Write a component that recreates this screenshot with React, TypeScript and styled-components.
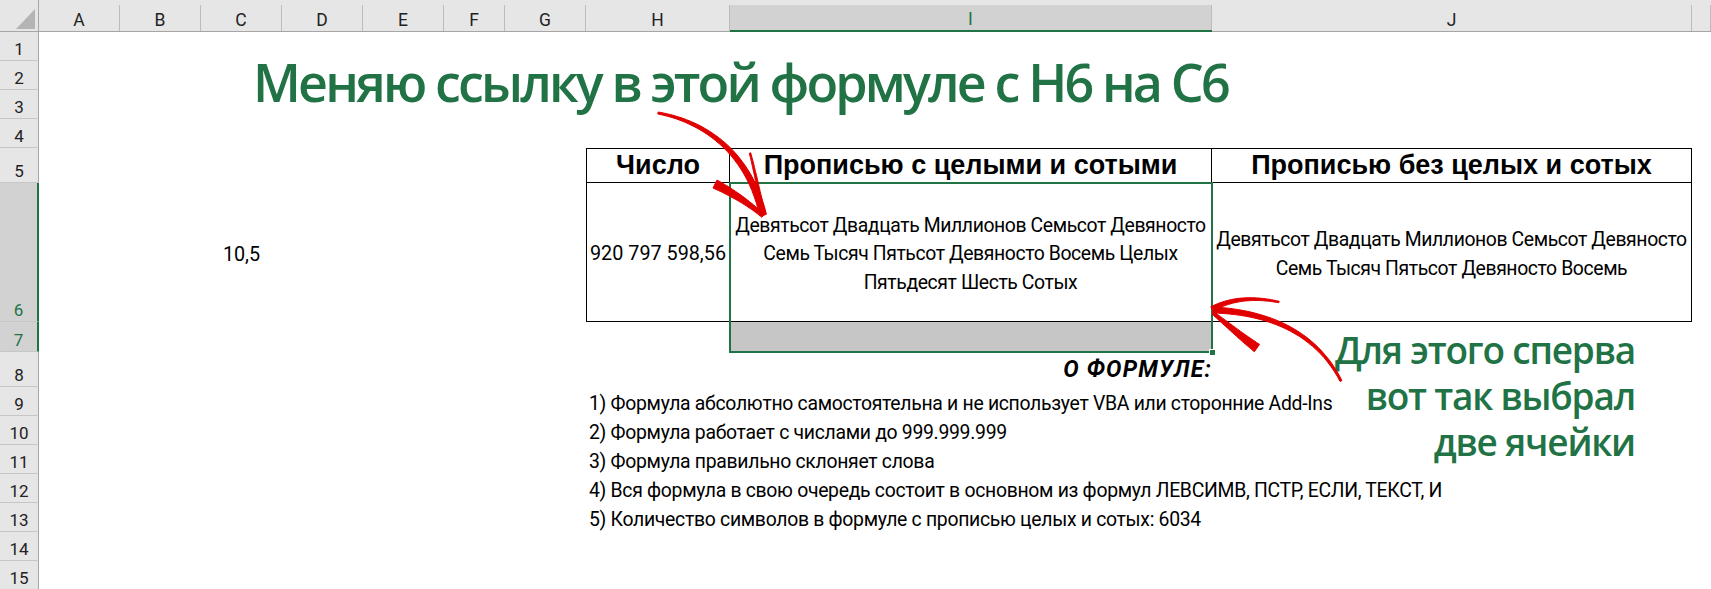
import React from "react";
import styled, { createGlobalStyle } from "styled-components";

const GREEN = "#217346";
const RED = "#e10000";
const CELL_FONT = `Roboto, "Noto Sans", sans-serif`;

const COLUMNS = [
  { name: "A", width: 81 },
  { name: "B", width: 81 },
  { name: "C", width: 81 },
  { name: "D", width: 81 },
  { name: "E", width: 81 },
  { name: "F", width: 61 },
  { name: "G", width: 81 },
  { name: "H", width: 144 },
  { name: "I", width: 482 },
  { name: "J", width: 480 },
];

const ROW_HEIGHTS = [29, 29, 29, 29, 35, 139, 30, 35, 29, 29, 29, 29, 29, 29, 29];
const SELECTED_ROWS = [6, 7];
const SELECTED_COL = "I";

const NOTES = [
  "1) Формула абсолютно самостоятельна и не использует VBA или сторонние Add-Ins",
  "2) Формула работает с числами до 999.999.999",
  "3) Формула правильно склоняет слова",
  "4) Вся формула в свою очередь состоит в основном из формул ЛЕВСИМВ, ПСТР, ЕСЛИ, ТЕКСТ, И",
  "5) Количество символов в формуле с прописью целых и сотых: 6034",
];

const GlobalStyle = createGlobalStyle`
  html, body {
    margin: 0;
    padding: 0;
    background: #fff;
  }
  body {
    width: 1711px;
    height: 589px;
    overflow: hidden;
  }
  * {
    box-sizing: border-box;
  }
`;

const Sheet = styled.div`
  position: relative;
  display: grid;
  grid-template-columns: 39px ${COLUMNS.map((c) => `${c.width}px`).join(" ")} 1fr;
  grid-template-rows: 32px ${ROW_HEIGHTS.map((h) => `${h}px`).join(" ")};
  width: 1711px;
  height: 589px;
  overflow: hidden;
  background: #fff;
  font-family: ${CELL_FONT};
  color: #000;
`;

const Corner = styled.div`
  grid-column: 1;
  grid-row: 1;
  display: flex;
  align-items: flex-end;
  justify-content: flex-end;
  padding: 0 3px 2px 0;
  background: #e6e6e6;
  border-right: 1px solid #a6a6a6;
  border-bottom: 1px solid #a6a6a6;
`;

const ColHead = styled.div<{ $col: number; $selected?: boolean }>`
  grid-column: ${(p) => p.$col};
  grid-row: 1;
  display: flex;
  padding-top: 5px;
  background: #e6e6e6;
  border-bottom: ${(p) => (p.$selected ? `2px solid ${GREEN}` : "1px solid #a6a6a6")};
`;

const ColLabel = styled.div<{ $selected?: boolean }>`
  flex: 1;
  display: flex;
  align-items: center;
  justify-content: center;
  padding-top: 3px;
  border-right: 1px solid #bcbcbc;
  background: ${(p) => (p.$selected ? "#d2d2d2" : "transparent")};
  color: ${(p) => (p.$selected ? GREEN : "#222")};
  font-size: 17.5px;
  line-height: 18px;
`;

const RowHead = styled.div<{ $row: number; $selected?: boolean }>`
  grid-column: 1;
  grid-row: ${(p) => p.$row};
  display: flex;
  align-items: flex-end;
  justify-content: center;
  padding-bottom: 2px;
  background: ${(p) => (p.$selected ? "#d2d2d2" : "#e6e6e6")};
  border-bottom: 1px solid #c6c6c6;
  border-right: ${(p) => (p.$selected ? `2px solid ${GREEN}` : "1px solid #a6a6a6")};
  color: ${(p) => (p.$selected ? GREEN : "#222")};
  font-size: 17px;
  line-height: 17px;
`;

const Cell = styled.div<{ $col: number; $row: number; $span?: number }>`
  grid-column: ${(p) => p.$col} / span ${(p) => p.$span ?? 1};
  grid-row: ${(p) => p.$row};
  min-width: 0;
`;

const ValueCell = styled(Cell)`
  display: flex;
  align-items: center;
  justify-content: center;
  padding-top: 5px;
  font-size: 19.8px;
  line-height: 28.3px;
`;

const TableHead = styled(Cell)<{ $first?: boolean }>`
  border-top: 1px solid #000;
  border-right: 1px solid #000;
  border-bottom: 1px solid #000;
  border-left: ${(p) => (p.$first ? "1px solid #000" : "none")};
  font-family: "Liberation Sans", Arial, sans-serif;
  font-weight: bold;
  font-size: 27px;
  line-height: 33px;
  text-align: center;
  white-space: nowrap;
`;

const TableCell = styled(Cell)<{ $first?: boolean; $numeric?: boolean }>`
  display: flex;
  flex-direction: column;
  align-items: center;
  justify-content: center;
  padding-top: 5px;
  border-right: 1px solid #000;
  border-bottom: 1px solid #000;
  border-left: ${(p) => (p.$first ? "1px solid #000" : "none")};
  font-size: ${(p) => (p.$numeric ? "19.8px" : "19.4px")};
  line-height: 28.3px;
  letter-spacing: ${(p) => (p.$numeric ? "0" : "-0.4px")};
  white-space: nowrap;
`;

const Shade = styled(Cell)`
  background: #c6c6c6;
`;

const Selection = styled.div`
  grid-column: 10;
  grid-row: 7 / 9;
  margin: -1px;
  position: relative;
  border: 2px solid ${GREEN};
  pointer-events: none;
  z-index: 1;
`;

const FillHandle = styled.span`
  position: absolute;
  right: -5px;
  bottom: -5px;
  width: 7px;
  height: 7px;
  background: ${GREEN};
  border: 1px solid #fff;
`;

const SectionTitle = styled(Cell)`
  text-align: right;
  font-weight: bold;
  font-style: italic;
  font-size: 23px;
  line-height: 35px;
  letter-spacing: 1.2px;
  white-space: nowrap;
`;

const NoteCell = styled(Cell)`
  padding: 2px 0 0 3px;
  font-size: 19.4px;
  line-height: 29px;
  letter-spacing: -0.3px;
  white-space: nowrap;
  overflow: visible;
`;

const Callout = styled.div`
  position: absolute;
  font-family: "Open Sans", sans-serif;
  font-weight: 600;
  color: ${GREEN};
  white-space: nowrap;
  z-index: 3;
`;

const Title = styled(Callout)`
  left: 253px;
  top: 56px;
  font-size: 52px;
  line-height: 52px;
  letter-spacing: -2.85px;
`;

const SideNote = styled(Callout)`
  right: 76px;
  top: 327px;
  font-size: 37px;
  line-height: 46px;
  text-align: right;
  letter-spacing: -1.2px;
`;

const ArrowLayer = styled.svg`
  position: absolute;
  inset: 0;
  width: 1711px;
  height: 589px;
  pointer-events: none;
  z-index: 4;
`;

type P = [number, number];

// tapered brush stroke along a cubic curve
function taper(p0: P, p1: P, p2: P, p3: P, w0: number, w1: number, n = 28) {
  const pt = (t: number): P => {
    const u = 1 - t;
    return [
      u * u * u * p0[0] + 3 * u * u * t * p1[0] + 3 * u * t * t * p2[0] + t * t * t * p3[0],
      u * u * u * p0[1] + 3 * u * u * t * p1[1] + 3 * u * t * t * p2[1] + t * t * t * p3[1],
    ];
  };
  const der = (t: number): P => {
    const u = 1 - t;
    return [
      3 * u * u * (p1[0] - p0[0]) + 6 * u * t * (p2[0] - p1[0]) + 3 * t * t * (p3[0] - p2[0]),
      3 * u * u * (p1[1] - p0[1]) + 6 * u * t * (p2[1] - p1[1]) + 3 * t * t * (p3[1] - p2[1]),
    ];
  };
  const left: P[] = [];
  const right: P[] = [];
  for (let i = 0; i <= n; i++) {
    const t = i / n;
    const [x, y] = pt(t);
    const [dx, dy] = der(t);
    const len = Math.hypot(dx, dy) || 1;
    const nx = -dy / len;
    const ny = dx / len;
    const w = (w0 + (w1 - w0) * t) / 2;
    left.push([x + nx * w, y + ny * w]);
    right.push([x - nx * w, y - ny * w]);
  }
  const f = (p: P) => `${p[0].toFixed(1)},${p[1].toFixed(1)}`;
  return `M${left.map(f).join("L")}L${right.reverse().map(f).join("L")}Z`;
}

const STROKES = [
  // arrow to I6
  taper([658, 113], [702, 121], [748, 150], [763, 215], 2, 7),
  taper([715, 184], [733, 193], [750, 204], [763, 216], 9, 3.5),
  taper([750, 153], [755, 172], [759, 192], [764, 215], 1.5, 3),
  // arrow to selection edge
  taper([1213, 310], [1265, 312], [1315, 330], [1341, 381], 6, 2),
  taper([1212, 309], [1232, 298], [1255, 297], [1279, 302], 5, 1.5),
  taper([1213, 313], [1228, 325], [1243, 338], [1257, 348], 3, 9),
];

const App: React.FC = () => {
  return (
    <>
      <GlobalStyle />
      <Sheet>
        <Corner>
          <svg width="19" height="20" viewBox="0 0 19 20">
            <polygon points="19,0 19,20 0,20" fill="#b4b4b4" />
          </svg>
        </Corner>
        {COLUMNS.map((c, i) => (
          <ColHead key={c.name} $col={i + 2} $selected={c.name === SELECTED_COL}>
            <ColLabel $selected={c.name === SELECTED_COL}>{c.name}</ColLabel>
          </ColHead>
        ))}
        <ColHead $col={12}>
          <ColLabel />
        </ColHead>
        {ROW_HEIGHTS.map((_, i) => (
          <RowHead key={i} $row={i + 2} $selected={SELECTED_ROWS.includes(i + 1)}>
            {i + 1}
          </RowHead>
        ))}

        <ValueCell $col={4} $row={7}>10,5</ValueCell>

        <TableHead $col={9} $row={6} $first>Число</TableHead>
        <TableHead $col={10} $row={6}>Прописью с целыми и сотыми</TableHead>
        <TableHead $col={11} $row={6}>Прописью без целых и сотых</TableHead>

        <TableCell $col={9} $row={7} $first $numeric>920 797 598,56</TableCell>
        <TableCell $col={10} $row={7}>
          <span>Девятьсот Двадцать Миллионов Семьсот Девяносто</span>
          <span>Семь Тысяч Пятьсот Девяносто Восемь Целых</span>
          <span>Пятьдесят Шесть Сотых</span>
        </TableCell>
        <TableCell $col={11} $row={7}>
          <span>Девятьсот Двадцать Миллионов Семьсот Девяносто</span>
          <span>Семь Тысяч Пятьсот Девяносто Восемь</span>
        </TableCell>

        <Shade $col={10} $row={8} />
        <Selection>
          <FillHandle />
        </Selection>

        <SectionTitle $col={10} $row={9}>О ФОРМУЛЕ:</SectionTitle>
        {NOTES.map((n, i) => (
          <NoteCell key={i} $col={9} $row={10 + i} $span={3}>
            {n}
          </NoteCell>
        ))}

        <Title>Меняю ссылку в этой формуле с H6 на C6</Title>
        <SideNote>
          Для этого сперва
          <br />
          вот так выбрал
          <br />
          две ячейки
        </SideNote>

        <ArrowLayer viewBox="0 0 1711 589">
          {STROKES.map((d, i) => (
            <path key={i} d={d} fill={RED} stroke={RED} strokeWidth={1} strokeLinejoin="round" />
          ))}
        </ArrowLayer>
      </Sheet>
    </>
  );
};

export default App;
